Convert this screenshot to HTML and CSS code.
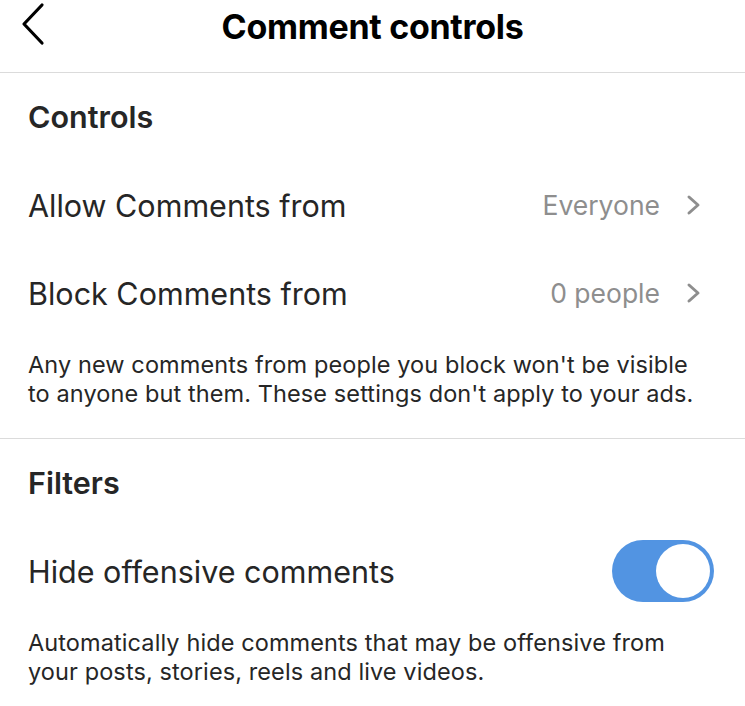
FILE: index.html
```html
<!DOCTYPE html>
<html lang="en">
<head>
    <meta charset="UTF-8">
    <meta name="viewport" content="width=device-width, initial-scale=1.0">
    <title>Comment controls</title>
    <link rel="stylesheet" href="styles.css">
</head>
<body>
    <header class="topbar">
        <a href="#" class="back-link" aria-label="Back">
            <svg width="26" height="44" viewBox="0 0 26 44">
                <polyline points="22,3 4,22 22,41" fill="none" stroke="#000" stroke-width="3.2" stroke-linecap="round" stroke-linejoin="round"/>
            </svg>
        </a>
        <h1>Comment controls</h1>
        <span></span>
    </header>

    <section class="group">
        <h2>Controls</h2>
        <a href="#" class="row">
            <span class="row-label">Allow Comments from</span>
            <span class="row-value">Everyone</span>
            <svg class="chevron" width="16" height="22" viewBox="0 0 16 22">
                <polyline points="3,3 12,11 3,19" fill="none" stroke="#8e8e8e" stroke-width="3" stroke-linecap="round" stroke-linejoin="round"/>
            </svg>
        </a>
        <a href="#" class="row">
            <span class="row-label">Block Comments from</span>
            <span class="row-value">0 people</span>
            <svg class="chevron" width="16" height="22" viewBox="0 0 16 22">
                <polyline points="3,3 12,11 3,19" fill="none" stroke="#8e8e8e" stroke-width="3" stroke-linecap="round" stroke-linejoin="round"/>
            </svg>
        </a>
        <p class="note">Any new comments from people you block won't be visible to anyone but them. These settings don't apply to your ads.</p>
    </section>

    <section class="group">
        <h2>Filters</h2>
        <div class="row">
            <span class="row-label">Hide offensive comments</span>
            <label class="switch">
                <input type="checkbox" checked>
                <span class="knob"></span>
            </label>
        </div>
        <p class="note">Automatically hide comments that may be offensive from your posts, stories, reels and live videos.</p>
    </section>
</body>
</html>
```

FILE: styles.css
```css
body {
    font-family: 'Inter', 'Noto Sans', sans-serif;
    background-color: #fff;
    color: #262626;
    margin: 0;
    padding: 0;
}

.topbar {
    display: grid;
    grid-template-columns: 70px 1fr 70px;
    align-items: start;
    height: 73px;
    border-bottom: 1px solid #dbdbdb;
    box-sizing: border-box;
}

.back-link {
    display: block;
    padding: 2px 0 0 20px;
}

.topbar h1 {
    margin: 0;
    padding-top: 7px;
    text-align: center;
    font-size: 34px;
    line-height: 40px;
    font-weight: 700;
    color: #000;
    letter-spacing: -0.3px;
}

.group {
    padding: 0 32px 0 28px;
    border-bottom: 1px solid #dbdbdb;
}

.group:last-child {
    border-bottom: none;
}

.group h2 {
    margin: 0;
    padding-top: 26px;
    height: 88px;
    box-sizing: border-box;
    font-size: 30.5px;
    font-weight: 600;
    line-height: 36px;
}

.row {
    display: flex;
    align-items: center;
    height: 88px;
    text-decoration: none;
    color: #262626;
}

.row-label {
    flex: 1;
    font-size: 30.5px;
}

.row-value {
    font-size: 26.5px;
    color: #8e8e8e;
    margin-right: 26px;
}

.chevron {
    margin-right: 11px;
}

.note {
    margin: 0;
    padding: 13px 8px 30px 0;
    font-size: 23.5px;
    line-height: 29px;
    letter-spacing: 0.1px;
    color: #262626;
}

.switch {
    position: relative;
    display: inline-block;
    width: 102px;
    height: 62px;
    margin-right: -1px;
}

.switch input {
    display: none;
}

.knob {
    position: absolute;
    inset: 0;
    background-color: #5294e2;
    border-radius: 31px;
}

.knob::after {
    content: "";
    position: absolute;
    top: 4px;
    right: 4px;
    width: 54px;
    height: 54px;
    border-radius: 50%;
    background-color: #fff;
}
```
